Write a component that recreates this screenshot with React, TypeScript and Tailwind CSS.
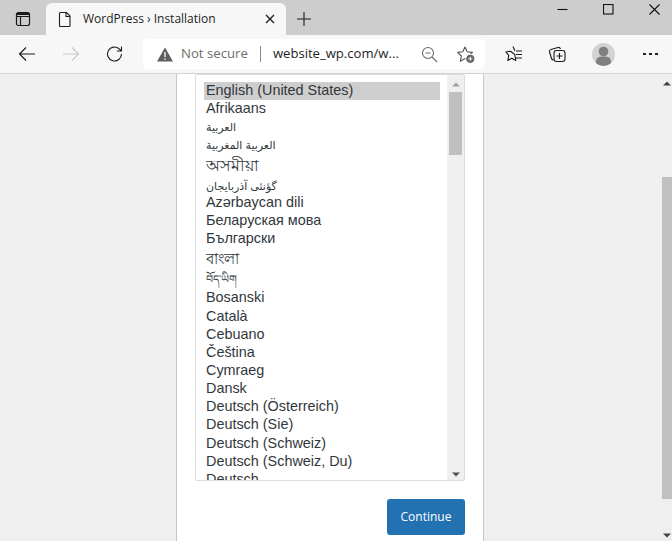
import React from "react";

const font = { fontFamily: '"Liberation Sans", Arial, sans-serif' };

const Ic = ({ className, children, w = 20, h = 20 }: { className?: string; children: React.ReactNode; w?: number; h?: number }) => (
  <svg width={w} height={h} viewBox={`0 0 ${w} ${h}`} fill="none" stroke="currentColor" strokeWidth="1.1" className={className}>
    {children}
  </svg>
);

const langs: [string, string][] = [
  ["English (United States)", "h-[18px]"],
  ["Afrikaans", "h-[18px]"],
  ["العربية", "h-[18px] text-[11px]"],
  ["العربية المغربية", "h-[18px] text-[11px]"],
  ["অসমীয়া", "h-[24px] text-[16px]"],
  ["گؤنئی آذربایجان", "h-[16px] text-[11px]"],
  ["Azərbaycan dili", "h-[18px]"],
  ["Беларуская мова", "h-[18px]"],
  ["Български", "h-[18px]"],
  ["বাংলা", "h-[22px] text-[15px]"],
  ["བོད་ཡིག", "h-[19px] text-[11px]"],
  ["Bosanski", "h-[18px]"],
  ["Català", "h-[19px]"],
  ["Cebuano", "h-[18px]"],
  ["Čeština", "h-[18px]"],
  ["Cymraeg", "h-[18px]"],
  ["Dansk", "h-[18px]"],
  ["Deutsch (Österreich)", "h-[18px]"],
  ["Deutsch (Sie)", "h-[18px]"],
  ["Deutsch (Schweiz)", "h-[19px]"],
  ["Deutsch (Schweiz, Du)", "h-[18px]"],
  ["Deutsch", "h-[18px]"],
];

function TabBar() {
  return (
    <div className="flex h-[35px] shrink-0 overflow-hidden bg-[#cdcdcd]">
      <div className="flex w-[46px] items-center justify-center pt-[3px]">
        <Ic w={16} h={16} className="text-[#1a1a1a]">
          <rect x="1.5" y="1.5" width="13" height="13" rx="2" strokeWidth="1.2" />
          <path d="M1.5 5.5h13 M1.5 3.5h13 M1.5 2.5h13 M5.5 5.5v9" strokeWidth="1.2" />
        </Ic>
      </div>
      <div className="mt-[3px] flex h-[32px] w-[240px] items-center rounded-t-[6px] bg-[#f7f7f7]">
        <Ic w={16} h={16} className="ml-[11px] text-[#1a1a1a]">
          <path d="M3.5 1.5h6l3.5 3.5v9.5a1 1 0 0 1-1 1h-8.500a1 1 0 0 1-1-1v-12a1 1 0 0 1 1-1z M9 1.500v4h4" />
        </Ic>
        <span className="ml-[10px] text-[12px] text-[#1d1d1d]" style={{ fontFamily: '"Open Sans", sans-serif' }}>
          WordPress › Installation
        </span>
        <Ic w={10} h={10} className="ml-auto mr-[11px] text-[#222]">
          <path d="M1 1l8 8M9 1l-8 8" strokeWidth="1.4" />
        </Ic>
      </div>
      <div className="ml-[10px] flex items-center pt-[2px]">
        <Ic w={16} h={16} className="text-[#1a1a1a]">
          <path d="M8 1v14M1 8h14" />
        </Ic>
      </div>
      <div className="ml-auto mr-[-5px] flex h-[18px] items-center pt-[1px]">
        <div className="flex w-[46px] justify-center">
          <Ic w={11} h={11} className="text-[#111]"><path d="M0.500 5.500h10" /></Ic>
        </div>
        <div className="flex w-[46px] justify-center">
          <Ic w={11} h={11} className="text-[#111]"><rect x="0.500" y="0.500" width="9.500" height="9.500" /></Ic>
        </div>
        <div className="flex w-[46px] justify-center">
          <Ic w={11} h={11} className="text-[#111]"><path d="M0.500 0.500l10 10M10.500 0.500l-10 10" /></Ic>
        </div>
      </div>
    </div>
  );
}

function ToolBar() {
  return (
    <div className="flex h-[39px] shrink-0 items-center border-b border-[#d2d2d2] bg-[#f7f7f7]">
      <div className="flex w-[143px] items-center">
        <Ic w={18} h={16} className="ml-[18px] text-[#1a1a1a]">
          <path d="M17 8H1.500M8 1.500L1.500 8L8 14.500" />
        </Ic>
        <Ic w={18} h={16} className="ml-[26px] text-[#c8c8c8]">
          <path d="M1 8h15.500M10 1.500L16.500 8L10 14.500" />
        </Ic>
        <Ic w={18} h={18} className="ml-[26px] text-[#1a1a1a]">
          <path d="M15.500 9a7 7 0 1 1-2.300-5.200L15.500 6M15.500 1.500V6H11" />
        </Ic>
      </div>
      <div className="flex h-[30px] w-[342px] items-center rounded-[5px] bg-white">
        <svg width="16" height="15" viewBox="0 0 16 15" className="ml-[14px]">
          <path d="M8 0.500L16 14.500H0z" fill="#5f5f5f" />
          <path d="M8 5v5M8 11.200v1.500" stroke="#fff" strokeWidth="1.300" />
        </svg>
        <span className="ml-[8px] text-[13.2px] text-[#6d6d6d]" style={{ fontFamily: '"Open Sans", sans-serif' }}>
          Not secure
        </span>
        <div className="ml-[12px] h-[16px] w-px bg-[#8a8a8a]" />
        <span className="ml-[12px] text-[13.1px] text-[#1d1d1d]" style={{ fontFamily: '"Open Sans", sans-serif' }}>
          website_wp.com/w...
        </span>
        <Ic w={17} h={17} className="ml-[22px] text-[#6b6b6b]">
          <circle cx="7" cy="7" r="5.500" />
          <path d="M4.500 7h5M11 11l5 5" />
        </Ic>
        <svg width="18" height="18" viewBox="0 0 18 18" fill="none" className="ml-[19px] mt-[2px] text-[#555]" stroke="currentColor" strokeWidth="1.100" strokeLinejoin="round">
          <path d="M8 1L10.200 5.800L15.500 6.400L11.600 10L12.700 15.200L8 12.600L3.300 15.200L4.400 10L0.500 6.400L5.800 5.800z" />
          <circle cx="13.300" cy="12.800" r="4.600" fill="#666" stroke="#fff" strokeWidth="1" />
          <path d="M11.300 12.800h4M13.300 10.800v4" stroke="#fff" strokeWidth="1" />
        </svg>
      </div>
      <Ic w={18} h={18} className="ml-[20px] text-[#1a1a1a]">
        <path d="M8 1.500L9.800 5.800L10 5.800M9.800 9.500L10.800 15.500L6.800 13.200L2.800 15.500L3.800 10.300L0.800 7L5.500 6.200z" strokeLinejoin="round" />
        <path d="M11 6h6M11 9.500h6M11 13h6" />
      </Ic>
      <Ic w={18} h={18} className="ml-[25px] text-[#1a1a1a]">
        <path d="M5.500 15a2 2 0 0 1-2-1.500L1.500 7a2 2 0 0 1 1.500-2.500L10 2.500a2 2 0 0 1 2.500 1.500" />
        <rect x="6" y="5.500" width="11" height="11" rx="2.500" />
        <path d="M11.500 8v6M8.500 11h6" />
      </Ic>
      <svg width="23" height="23" viewBox="0 0 23 23" className="ml-[26px]">
        <circle cx="11.500" cy="11.500" r="11.500" fill="#d2d2d2" />
        <circle cx="11.500" cy="8.500" r="4.800" fill="#7f7f7f" />
        <path d="M4 20c0-6 3-6.500 7.500-6.500s7.500 0.500 7.500 6.500a11 11 0 0 1-15 0z" fill="#7f7f7f" />
      </svg>
      <div className="ml-[28px] flex gap-[3px]">
        <span className="h-[2px] w-[3px] bg-[#222]" />
        <span className="h-[2px] w-[3px] bg-[#222]" />
        <span className="h-[2px] w-[3px] bg-[#222]" />
      </div>
    </div>
  );
}

function Arrow({ up, className }: { up?: boolean; className: string }) {
  return (
    <svg width="8" height="5" viewBox="0 0 8 5" className={className} fill="currentColor">
      <path d={up ? "M4 0.500L8 4.500H0z" : "M0 0.500H8L4 4.500z"} />
    </svg>
  );
}

function ListBox() {
  return (
    <div className="flex h-[407px] w-[270px] shrink-0 overflow-hidden rounded-[2px] border border-[#dcdcdc] bg-white" style={font}>
      <div className="flex-1 overflow-hidden pl-[8px] pr-[7px] pt-[7px]">
        {langs.map(([t, c], i) => (
          <div
            key={i}
            className={`${c} flex items-center whitespace-nowrap pl-[2px] ${c.includes("text-") ? "" : "text-[14.4px]"} text-[#32373c] ${i === 0 ? "bg-[#cecece]" : ""}`}
            style={{ fontFamily: '"Liberation Sans", "DejaVu Sans", "Noto Sans", sans-serif' }}
          >
            {t}
          </div>
        ))}
      </div>
      <div className="flex w-[17px] shrink-0 flex-col items-center bg-[#efefef]">
        <Arrow up className="mt-[7px] text-[#a3a3a3]" />
        <div className="mt-[5px] h-[63px] w-[13px] bg-[#c0c0c0]" />
        <Arrow className="mt-auto mb-[3px] text-[#505050]" />
      </div>
    </div>
  );
}

function Page() {
  return (
    <div className="flex min-h-0 flex-1 bg-[#efefef]">
      <div className="flex min-w-0 flex-1 pl-[176px]">
        <div className="flex w-[308px] flex-col items-start border-x border-[#c8c8c8] bg-white pl-[18px]">
          <ListBox />
          <button className="ml-[192px] mt-[18px] h-[36px] w-[78px] shrink-0 rounded-[3px] bg-[#2271b1] text-[12px] text-white" style={{ fontFamily: '"Open Sans", sans-serif' }}>
            Continue
          </button>
        </div>
      </div>
      <div className="flex w-[10px] shrink-0 flex-col items-center">
        <Arrow up className="mt-[7px] text-[#444]" />
        <div className="mt-[91px] h-[322px] w-[10px] bg-[#c0c0c0]" />
        <Arrow className="mt-auto mb-[3px] text-[#444]" />
      </div>
    </div>
  );
}

export default function App() {
  return (
    <div className="flex h-[541px] w-[672px] flex-col overflow-hidden" style={font}>
      <TabBar />
      <ToolBar />
      <Page />
    </div>
  );
}
